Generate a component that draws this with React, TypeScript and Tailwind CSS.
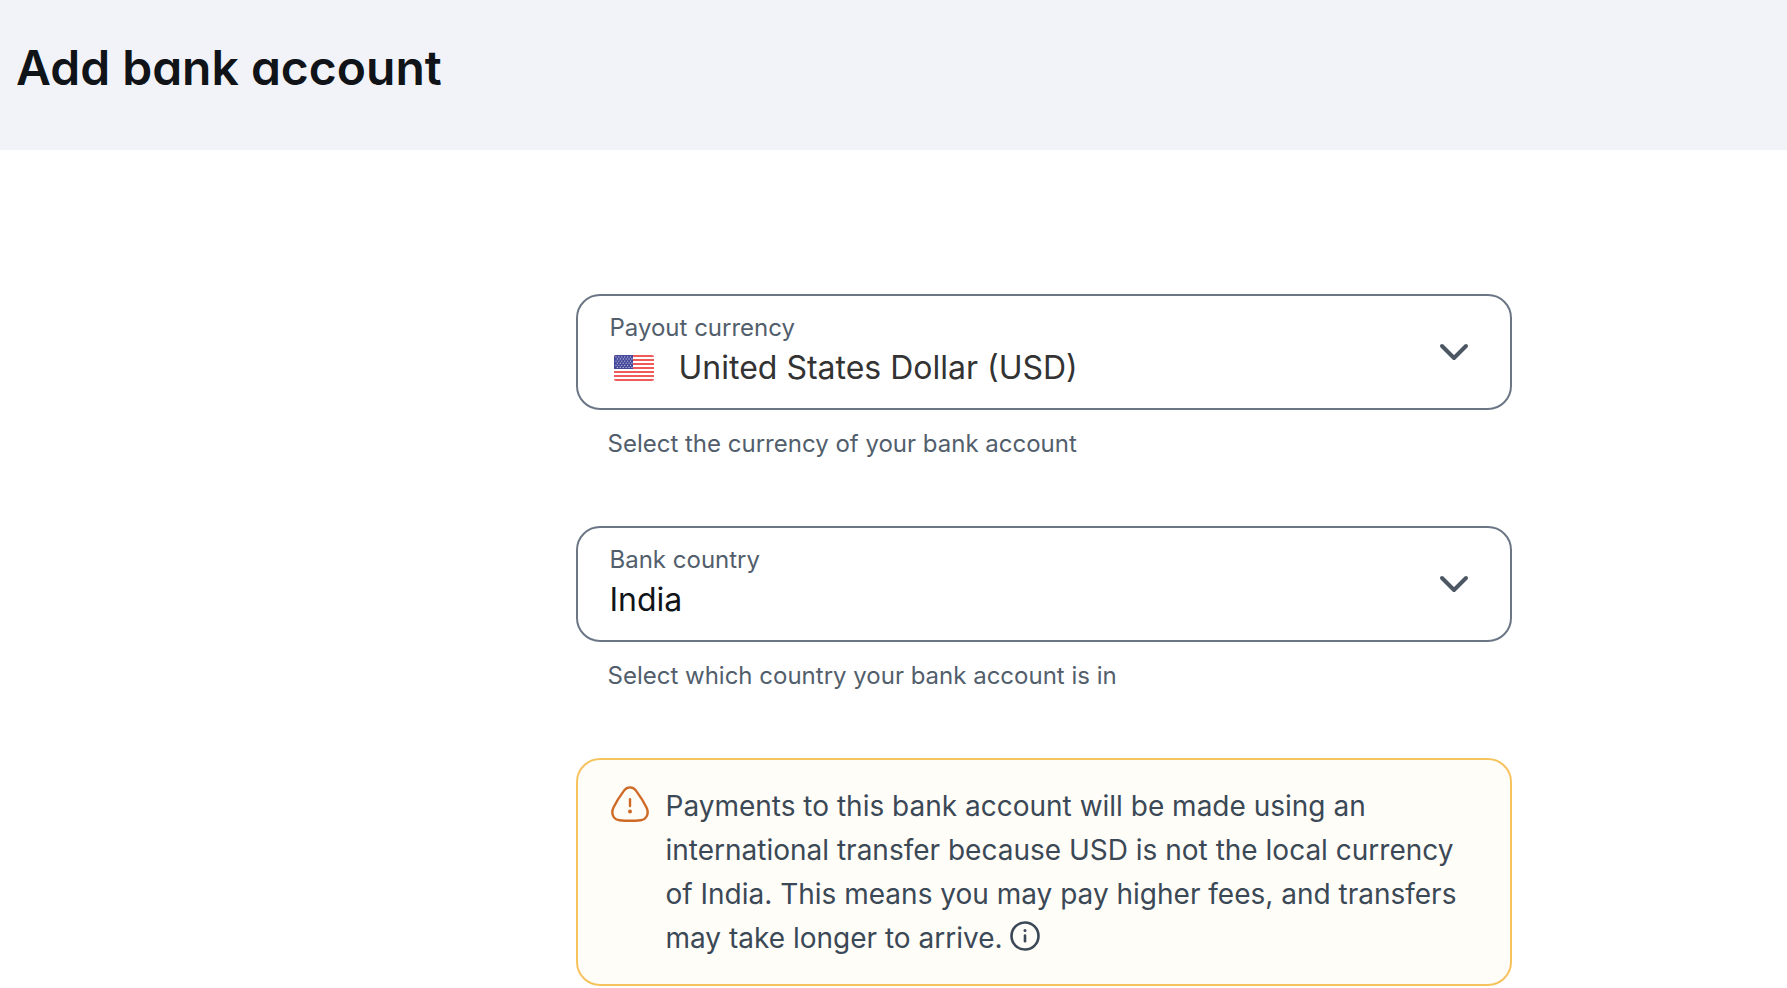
import type { ReactNode } from "react";
import { ChevronDown } from "lucide-react";

function UsFlag() {
  const stars = [];
  for (let row = 0; row < 6; row++) {
    for (let col = 0; col < 6; col++) {
      stars.push(
        <circle
          key={`${row}-${col}`}
          cx={(row % 2 ? 3.4 : 2) + col * 2.9}
          cy={1.9 + row * 2.1}
          r={0.65}
        />
      );
    }
  }
  return (
    <svg viewBox="0 0 40 26" className="h-[26px] w-10" aria-hidden="true">
      <defs>
        <clipPath id="flag-shape">
          <rect width="40" height="26" rx="2" />
        </clipPath>
      </defs>
      <g clipPath="url(#flag-shape)">
        <rect width="40" height="26" fill="#ffffff" />
        {[0, 4, 8, 12, 16, 20, 24].map((y) => (
          <rect key={y} y={y} width="40" height="2" fill="#ef5a5a" />
        ))}
        <rect width="19" height="14" fill="#45489a" />
        <g fill="#c9cae6">{stars}</g>
      </g>
    </svg>
  );
}

function WarningIcon() {
  return (
    <svg
      viewBox="0 0 38 36"
      className="h-9 w-[38px] shrink-0"
      fill="none"
      stroke="#cf6a26"
      strokeWidth="2.4"
      strokeLinecap="round"
      strokeLinejoin="round"
      aria-hidden="true"
    >
      <path d="M19 1.4C16.6 1.4 14.7 2.4 13.2 4.4C9.3 9.6 5.4 15.6 2.5 21.6C1.2 24.3 .9 27 2 29.6C3.2 32.4 5.4 33.9 8.4 34.2C15.4 34.9 22.6 34.9 29.6 34.2C32.6 33.9 34.8 32.4 36 29.6C37.1 27 36.8 24.3 35.5 21.6C32.6 15.6 28.7 9.6 24.8 4.4C23.3 2.4 21.4 1.4 19 1.4Z" />
      <path d="M19 13.2V20" />
      <circle cx="19" cy="25.5" r="2" fill="#cf6a26" stroke="none" />
    </svg>
  );
}

function InfoIcon() {
  return (
    <svg viewBox="0 0 30 30" className="size-[30px]" fill="none" aria-hidden="true">
      <circle cx="15" cy="15" r="13.5" stroke="#3b4856" strokeWidth="2.6" />
      <circle cx="15" cy="9.6" r="1.5" fill="#3b4856" />
      <path d="M15 14.6V20.2" stroke="#3b4856" strokeWidth="2.6" strokeLinecap="round" />
    </svg>
  );
}

type FieldProps = {
  id: string;
  label: string;
  hint: string;
  options: string[];
  icon?: ReactNode;
};

function SelectField({ id, label, hint, options, icon }: FieldProps) {
  return (
    <div>
      <div className="grid rounded-3xl border-2 border-[#6b7785] bg-white *:col-start-1 *:row-start-1">
        <select
          id={id}
          aria-describedby={`${id}-hint`}
          className={
            icon
              ? "h-28 w-full appearance-none rounded-3xl bg-transparent pt-8 pr-24 pl-[101px] text-[32px] text-[#333333]"
              : "h-28 w-full appearance-none rounded-3xl bg-transparent pt-8 pr-24 pl-8 text-[32px] text-[#101418]"
          }
        >
          {options.map((option) => (
            <option key={option}>{option}</option>
          ))}
        </select>
        <label
          htmlFor={id}
          className="mt-4 ml-8 self-start justify-self-start text-2xl leading-8 text-[#525e6c]"
        >
          {label}
        </label>
        {icon && (
          <span className="pointer-events-none mb-[27px] ml-9 self-end justify-self-start">{icon}</span>
        )}
        <ChevronDown
          className="pointer-events-none mr-8 size-12 self-center justify-self-end text-[#4d5764]"
          strokeWidth={2}
          aria-hidden="true"
        />
      </div>
      <p id={`${id}-hint`} className="mt-[18px] ml-8 text-2xl leading-8 text-[#525e6c]">
        {hint}
      </p>
    </div>
  );
}

export default function App() {
  return (
    <div className="min-h-screen bg-white font-['Inter',sans-serif]">
      <header className="bg-[#f2f3f8] px-4 pt-10 pb-[54px]">
        <h1 className="text-[48px] leading-14 font-semibold text-[#101418] [font-feature-settings:'cv11']">
          Add bank account
        </h1>
      </header>
      <main className="ml-[calc(50%-318px)] flex max-w-[936px] flex-col pt-36">
        <form className="flex flex-col gap-[66px]">
          <SelectField
            id="currency"
            label="Payout currency"
            hint="Select the currency of your bank account"
            options={["United States Dollar (USD)"]}
            icon={<UsFlag />}
          />
          <SelectField
            id="country"
            label="Bank country"
            hint="Select which country your bank account is in"
            options={["India"]}
          />
          <div
            role="alert"
            className="flex gap-[17px] rounded-3xl border-2 border-[#f6c35e] bg-[#fffdf8] py-6 pr-10 pl-[33px]"
          >
            <div className="pt-0.5">
              <WarningIcon />
            </div>
            <p className="text-[28px] leading-11 text-[#3b4856]">
              Payments to this bank account will be made using an international transfer because USD is not the local
              currency of India. This means you may pay higher fees, and transfers may take longer to arrive.{" "}
              <button type="button" aria-label="More information" className="align-[-3px]">
                <InfoIcon />
              </button>
            </p>
          </div>
        </form>
      </main>
    </div>
  );
}
